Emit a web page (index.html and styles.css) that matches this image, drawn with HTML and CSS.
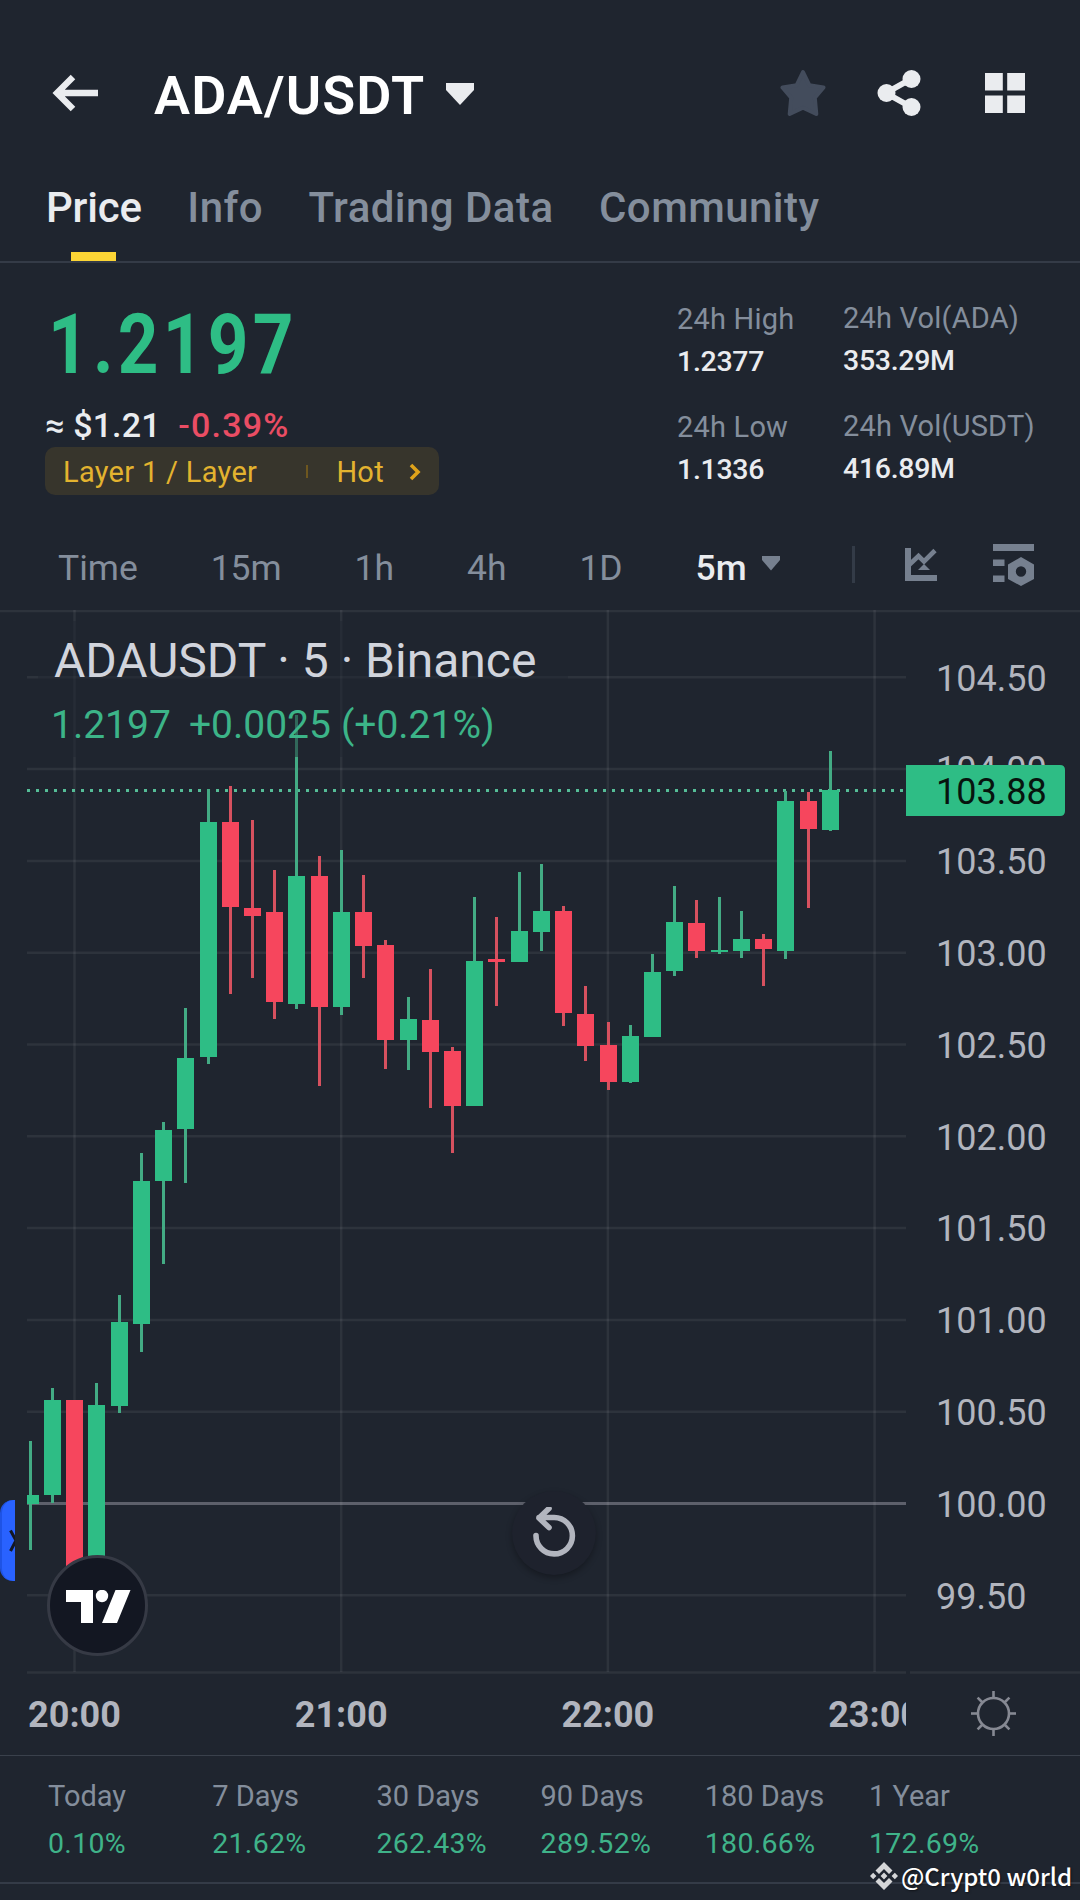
FILE: index.html
```html
<!DOCTYPE html>
<html lang="en">
<head>
    <meta charset="UTF-8">
    <meta name="viewport" content="width=device-width, initial-scale=1.0">
    <title>ADA/USDT</title>
    <link rel="stylesheet" href="styles.css">
</head>
<body>
    <header class="header">
        <svg class="back" width="48" height="38" viewBox="0 0 48 38">
            <path d="M22 3 L6 19 L22 35 M5 19 H47" fill="none" stroke="#eaecef" stroke-width="6.4"/>
        </svg>
        <h1 class="pair">ADA/USDT</h1>
        <svg class="pair-caret" width="28" height="22" viewBox="0 0 28 22">
            <path d="M0 0 H28 V7 L14 22 L0 7 Z" fill="#eaecef"/>
        </svg>
        <div class="actions">
            <svg width="46" height="48" viewBox="0 0 46 48">
                <path d="M23 3 L29.3 16.2 L43.5 18.5 L34.8 28.8 L36.3 45 L23 38.8 L9.7 45 L11.2 28.8 L2.5 18.5 L16.7 16.2 Z" fill="#434c5c" stroke="#434c5c" stroke-width="4" stroke-linejoin="round"/>
            </svg>
            <svg width="44" height="48" viewBox="0 0 44 48">
                <path d="M34 10 L9 24 L34 38" fill="none" stroke="#eaecef" stroke-width="6"/>
                <circle cx="34.5" cy="10" r="9" fill="#eaecef"/>
                <circle cx="9.5" cy="24" r="9" fill="#eaecef"/>
                <circle cx="34.5" cy="38" r="9" fill="#eaecef"/>
            </svg>
            <svg width="40" height="40" viewBox="0 0 40 40">
                <path d="M0 0 H17.8 V17.6 H0 Z M22.2 0 H40 V17.6 H22.2 Z M0 22.4 H17.8 V40 H0 Z M22.2 22.4 H40 V40 H22.2 Z" fill="#eaecef"/>
            </svg>
        </div>
    </header>

    <nav class="tabs">
        <span class="tab active">Price</span>
        <span class="tab">Info</span>
        <span class="tab">Trading Data</span>
        <span class="tab">Community</span>
    </nav>

    <section class="summary">
        <div class="quote">
            <div class="last-price">1.2197</div>
            <div class="fiat">≈ $1.21 <span class="change">-0.39%</span></div>
            <div class="tag">
                <span>Layer 1 / Layer</span>
                <i class="tag-divider"></i>
                <span>Hot</span>
                <svg class="tag-arrow" width="12" height="18" viewBox="0 0 12 18">
                    <path d="M2 2 L9 9 L2 16" fill="none" stroke="#dfa31a" stroke-width="3.6"/>
                </svg>
            </div>
        </div>
        <div class="stats">
            <div class="stat-col">
                <div class="label">24h High</div>
                <div class="value">1.2377</div>
                <div class="label second">24h Low</div>
                <div class="value">1.1336</div>
            </div>
            <div class="stat-col vol">
                <div class="label">24h Vol(ADA)</div>
                <div class="value">353.29M</div>
                <div class="label second">24h Vol(USDT)</div>
                <div class="value">416.89M</div>
            </div>
        </div>
    </section>

    <div class="intervals">
        <span>Time</span>
        <span>15m</span>
        <span>1h</span>
        <span>4h</span>
        <span>1D</span>
        <span class="active">5m</span>
        <svg class="interval-caret" width="18" height="15" viewBox="0 0 18 15">
            <path d="M0 0 H18 V4 L9 14.5 L0 4 Z" fill="#76808f"/>
        </svg>
        <div class="tools">
            <i class="tools-divider"></i>
            <svg width="33" height="33" viewBox="0 0 33 33">
                <path d="M3 0 V30 H32" fill="none" stroke="#76808f" stroke-width="6"/>
                <path d="M4 17 L13.5 8 L19 13.5 L30 2.5" fill="none" stroke="#76808f" stroke-width="4.6"/>
                <path d="M19 16 L25 22 H13 Z" fill="#76808f"/>
            </svg>
            <svg width="41" height="44" viewBox="0 0 41 44">
                <path d="M0 1 H41 V8 H0 Z M0 16.5 H11.5 V23 H0 Z M0 32.5 H11.5 V39 H0 Z" fill="#76808f"/>
                <path fill-rule="evenodd" d="M28 14 L41 21.5 V36 L28 43 L15 36 V21.5 Z M28 23.3 A5.2 5.2 0 1 0 28 33.7 A5.2 5.2 0 1 0 28 23.3 Z" fill="#76808f"/>
            </svg>
        </div>
    </div>

    <section class="chart">
        <svg id="plot" class="plot" width="1080" height="1146" viewBox="0 610 1080 1146">
            <defs>
                <clipPath id="pane"><rect x="27" y="610" width="879" height="1146"/></clipPath>
            </defs>
            <g id="grid"></g>
            <g id="candles" clip-path="url(#pane)"></g>
            <g id="axis"></g>
        </svg>

        <div class="legend">
            <div class="legend-title">ADAUSDT · 5 · Binance</div>
            <div class="legend-values"><span>1.2197</span><span>+0.0025</span><span>(+0.21%)</span></div>
        </div>

        <div class="drawer">
            <svg width="15" height="81" viewBox="0 0 15 81">
                <path d="M10.5 30.5 L16 40.5 L10.5 51" fill="none" stroke="#131722" stroke-width="3"/>
            </svg>
        </div>

        <div class="reset">
            <svg width="48" height="56" viewBox="0 0 48 56">
                <path d="M6 28.5 A18.2 18.2 0 1 0 24.2 10.5 H9 M19 1.5 L9 11 L19 20.5" fill="none" stroke="#b2b5be" stroke-width="5.6" stroke-linecap="round" stroke-linejoin="round"/>
            </svg>
        </div>

        <div class="tv-logo">
            <svg width="65" height="33" viewBox="0 0 65 33">
                <path d="M0 0 H27 V33 H15 V12 H0 Z M49.5 0 H64.5 L51 33 H36 Z" fill="#fff"/>
                <circle cx="36" cy="6" r="6.2" fill="#fff"/>
            </svg>
        </div>
    </section>

    <section class="performance">
        <div><div class="label">Today</div><div class="gain">0.10%</div></div>
        <div><div class="label">7 Days</div><div class="gain">21.62%</div></div>
        <div><div class="label">30 Days</div><div class="gain">262.43%</div></div>
        <div><div class="label">90 Days</div><div class="gain">289.52%</div></div>
        <div><div class="label">180 Days</div><div class="gain">180.66%</div></div>
        <div><div class="label">1 Year</div><div class="gain">172.69%</div></div>
    </section>

    <div class="watermark">
        <svg width="28" height="28" viewBox="0 0 28 28">
            <path d="M14 0 L22.5 8.5 L19 12 L14 7 L9 12 L5.5 8.5 Z M14 28 L22.5 19.5 L19 16 L14 21 L9 16 L5.5 19.5 Z M3.2 10.8 L6.4 14 L3.2 17.2 L0 14 Z M24.8 10.8 L28 14 L24.8 17.2 L21.6 14 Z M14 10.6 L17.4 14 L14 17.4 L10.6 14 Z" fill="#d5d6d8"/>
        </svg>
        <span>@Crypt0 w0rld</span>
    </div>

    <script>
        const NS = 'http://www.w3.org/2000/svg';
        const grid = document.getElementById('grid');
        const candles = document.getElementById('candles');
        const axis = document.getElementById('axis');

        function add(parent, name, attrs, text) {
            const el = document.createElementNS(NS, name);
            for (const key in attrs) el.setAttribute(key, attrs[key]);
            if (text) el.textContent = text;
            parent.appendChild(el);
        }

        // Price levels
        for (let i = 0; i <= 10; i++) {
            const y = 677.3 + i * 91.8;
            const price = (104.5 - i * 0.5).toFixed(2);
            add(grid, 'line', { x1: 27, x2: 906, y1: y, y2: y, class: price === '100.00' ? 'base-line' : 'grid-line' });
            add(axis, 'text', { x: 936, y: Math.floor(y + 13.7), class: 'price-label' }, price);
        }

        // Hours
        ['20:00', '21:00', '22:00', '23:00'].forEach((time, i) => {
            const x = 74.5 + i * 266.7;
            add(grid, 'line', { x1: x, x2: x, y1: 610, y2: 1672, class: 'grid-line' });
            add(axis, 'text', { x: x, y: 1727, class: 'time-label', 'clip-path': 'url(#pane)' }, time);
        });

        add(grid, 'line', { x1: 0, x2: 1080, y1: 611, y2: 611, class: 'grid-line' });
        add(grid, 'line', { x1: 27, x2: 906, y1: 1672.5, y2: 1672.5, class: 'grid-line' });
        add(grid, 'line', { x1: 910, x2: 1080, y1: 1672.5, y2: 1672.5, class: 'grid-line' });
        add(grid, 'line', { x1: 27, x2: 905, y1: 790.5, y2: 790.5, class: 'last-line' });

        // direction, high, body top, body bottom, low
        const data = [
            ['up', 1441, 1495, 1504, 1550], ['up', 1388, 1400, 1495, 1503],
            ['down', 1400, 1400, 1600, 1600], ['up', 1383, 1405, 1600, 1600],
            ['up', 1295, 1322, 1406, 1413], ['up', 1153, 1181, 1324, 1352],
            ['up', 1122, 1130, 1181, 1264], ['up', 1008, 1058, 1129, 1183],
            ['up', 789, 822, 1057, 1064], ['down', 786, 822, 907, 994],
            ['down', 820, 908, 916, 978], ['down', 870, 912, 1002, 1019],
            ['up', 715, 876, 1004, 1009], ['down', 856, 876, 1007, 1086],
            ['up', 850, 912, 1007, 1015], ['down', 875, 912, 946, 978],
            ['down', 940, 945, 1040, 1069], ['up', 997, 1019, 1040, 1070],
            ['down', 969, 1020, 1052, 1108], ['down', 1047, 1051, 1106, 1153],
            ['up', 897, 961, 1106, 1106], ['down', 917, 959, 962, 1006],
            ['up', 872, 931, 962, 962], ['up', 864, 911, 932, 951],
            ['down', 906, 911, 1013, 1026], ['down', 986, 1014, 1046, 1061],
            ['down', 1022, 1045, 1082, 1090], ['up', 1025, 1036, 1082, 1083],
            ['up', 954, 972, 1037, 1037], ['up', 886, 922, 971, 976],
            ['down', 900, 923, 951, 958], ['up', 897, 950, 952, 954],
            ['up', 911, 939, 951, 958], ['down', 934, 939, 949, 986],
            ['up', 791, 801, 951, 959], ['down', 792, 801, 829, 908],
            ['up', 751, 790, 830, 831]
        ];
        data.forEach(([dir, high, top, bottom, low], i) => {
            const x = Math.round(30.33 + i * 22.22 - 1.5);
            add(candles, 'rect', { x: x, y: high, width: 3, height: low - high, class: 'wick ' + dir });
            add(candles, 'rect', { x: x - 7, y: top, width: 17, height: bottom - top, class: 'body ' + dir });
        });

        // Last price
        add(axis, 'path', { d: 'M906 765 H1060 Q1065 765 1065 770 V811 Q1065 816 1060 816 H906 Z', class: 'last-tag' });
        add(axis, 'text', { x: 936, y: 804, class: 'last-label' }, '103.88');

        // Axis settings
        add(axis, 'circle', { cx: 993.5, cy: 1713.5, r: 15.5, class: 'sun' });
        for (let i = 0; i < 8; i++) {
            add(axis, 'path', { d: 'M993.5 1698 V1691', class: 'sun', transform: `rotate(${i * 45} 993.5 1713.5)` });
        }
    </script>
</body>
</html>
```
FILE: styles.css
```css
* {
    box-sizing: border-box;
}
body {
    position: relative;
    width: 1080px;
    height: 1900px;
    margin: 0;
    display: flex;
    flex-direction: column;
    overflow: hidden;
    background-color: #1f252f;
    color: #eaecef;
    font-family: Roboto, "Noto Sans", sans-serif;
}
svg {
    display: block;
    flex: none;
}

/* Header */
.header {
    height: 188px;
    display: flex;
    align-items: center;
    padding: 0 55px 2px 51px;
}
.pair {
    margin: 5px 0 0 55px;
    font-size: 54px;
    font-weight: 600;
    letter-spacing: 1.1px;
    line-height: 64px;
    color: #fff;
}
.pair-caret {
    margin: 2px 0 0 21px;
}
.actions {
    margin-left: auto;
    display: flex;
    align-items: center;
    gap: 51px;
}
.actions svg:last-child {
    margin-left: 13px;
}

/* Tabs */
.tabs {
    height: 75px;
    display: flex;
    gap: 45.5px;
    padding-left: 46px;
    border-bottom: 2px solid #343b47;
    font-size: 42px;
    font-weight: 500;
    letter-spacing: 0.45px;
    line-height: 40px;
    color: #848e9c;
}
.tab.active {
    position: relative;
    letter-spacing: -0.2px;
    color: #eaecef;
}
.tab.active::after {
    content: "";
    position: absolute;
    left: 25px;
    bottom: 0;
    width: 45px;
    height: 9px;
    background-color: #fcd535;
}

/* Price and 24h stats */
.summary {
    height: 257px;
    display: flex;
    justify-content: space-between;
    padding: 30px 46px 0 45px;
}
.last-price {
    height: 102px;
    font-size: 83.5px;
    font-weight: 700;
    line-height: 104px;
    letter-spacing: 5px;
    color: #2ebd85;
    transform: scaleX(0.85);
    transform-origin: left center;
    margin-left: 3px;
}
.fiat {
    height: 52px;
    padding-top: 8px;
    font-size: 34px;
    font-weight: 500;
    letter-spacing: 0.15px;
    line-height: 44px;
    white-space: nowrap;
}
.change {
    margin-left: 9px;
    letter-spacing: 1.2px;
    color: #ea4d64;
}
.tag {
    width: 394px;
    height: 48px;
    display: flex;
    align-items: center;
    padding: 1px 18px 0 18px;
    border-radius: 10px;
    background-color: #37352c;
    font-size: 29px;
    letter-spacing: 0.3px;
    color: #e3b32f;
}
.tag-divider {
    width: 2px;
    height: 13px;
    margin: 0 28px 0 auto;
    background-color: #6e571f;
}
.tag-arrow {
    margin-left: 25px;
}
.stats {
    display: flex;
    width: 357px;
    font-size: 29px;
    letter-spacing: 0.2px;
    line-height: 43px;
    white-space: nowrap;
    padding-top: 5px;
}
.stat-col {
    width: 166px;
}
.stat-col.vol {
    margin-top: -1px;
}
.label {
    color: #848e9c;
}
.label.second {
    margin-top: 23px;
}
.value {
    margin-top: -1px;
    font-size: 28.5px;
    font-weight: 500;
    letter-spacing: -0.3px;
}

/* Interval bar */
.intervals {
    height: 90px;
    display: flex;
    align-items: center;
    gap: 72.9px;
    padding: 5px 48px 0 58px;
    font-size: 35.5px;
    line-height: 42px;
    color: #848e9c;
}
.intervals > .active {
    color: #eaecef;
    font-weight: 500;
}
.interval-caret {
    margin: 0 0 8px -58px;
}
.tools {
    display: flex;
    align-items: center;
    margin: 0 3px 7px auto;
}
.tools-divider {
    width: 3px;
    height: 37px;
    margin-right: 50px;
    background-color: #333b47;
}
.tools svg + svg {
    margin-left: 55px;
    margin-top: 2px;
}

/* Chart */
.chart {
    position: relative;
    height: 1146px;
    border-bottom: 1px solid #3a414c;
}
.grid-line {
    stroke: #fff;
    stroke-opacity: 0.065;
    stroke-width: 2.5;
}
.base-line {
    stroke: #5d606b;
    stroke-width: 3;
}
.last-line {
    stroke: #55bd97;
    stroke-width: 3;
    stroke-dasharray: 3 6;
}
.wick.up {
    fill: #43ab84;
}
.wick.down {
    fill: #d6515f;
}
.body.up,
.last-tag {
    fill: #2ebd85;
}
.body.down {
    fill: #f6465d;
}
.price-label,
.last-label {
    font-size: 36px;
    fill: #b2b5be;
}
.last-label {
    fill: #07140e;
}
.time-label {
    font-size: 36px;
    font-weight: 700;
    text-anchor: middle;
    fill: #b2b5be;
}
.sun {
    fill: none;
    stroke: #868993;
    stroke-width: 2.6;
}
.legend {
    position: absolute;
    left: 38px;
    top: 11px;
    width: 530px;
    height: 136px;
    padding: 12px 0 0 13px;
    background-color: rgba(31, 37, 47, 0.5);
    white-space: nowrap;
}
.legend-title {
    padding-left: 3px;
    font-size: 48px;
    line-height: 56px;
    color: #d1d4dc;
}
.legend-values {
    display: flex;
    padding-top: 13px;
    font-size: 39px;
    line-height: 46px;
    color: #3cb488;
}
.legend-values span:nth-child(2) {
    margin: 0 10px 0 18px;
}
.drawer {
    position: absolute;
    left: 0;
    top: 890px;
    width: 15px;
    height: 81px;
    border-left: 2px solid #1e53e5;
    border-radius: 13px 0 0 13px;
    background-color: #2962ff;
    overflow: hidden;
}
.drawer svg {
    margin-left: -2px;
}
.reset,
.tv-logo {
    position: absolute;
    display: flex;
    align-items: center;
    justify-content: center;
    border-radius: 50%;
}
.reset {
    left: 512px;
    top: 881px;
    width: 84px;
    height: 84px;
    background-color: #1e222d;
    box-shadow: 0 3px 6px rgba(0, 0, 0, 0.3);
}
.reset svg {
    margin-top: 3px;
}
.tv-logo {
    left: 47px;
    top: 945px;
    width: 101px;
    height: 101px;
    border: 3px solid #363a45;
    background-color: #131722;
}
.tv-logo svg {
    margin-top: 2px;
    margin-left: 2px;
}

/* Performance */
.performance {
    height: 128px;
    display: grid;
    grid-template-columns: repeat(6, 164.2px);
    padding: 18px 0 0 48px;
    border-bottom: 2px solid #343b47;
    font-size: 29px;
    line-height: 44px;
}
.gain {
    margin-top: 4px;
    font-size: 28.5px;
    letter-spacing: 0.3px;
    color: #3fb389;
}
.watermark {
    position: absolute;
    left: 870px;
    top: 1862px;
    display: flex;
    align-items: center;
    gap: 3px;
    font-family: "Noto Sans CJK SC", sans-serif;
    font-size: 24px;
    font-weight: 500;
    line-height: 28px;
    color: #fff;
    white-space: nowrap;
    text-shadow: 1px 1px 2px rgba(0, 0, 0, 0.5);
}
```
